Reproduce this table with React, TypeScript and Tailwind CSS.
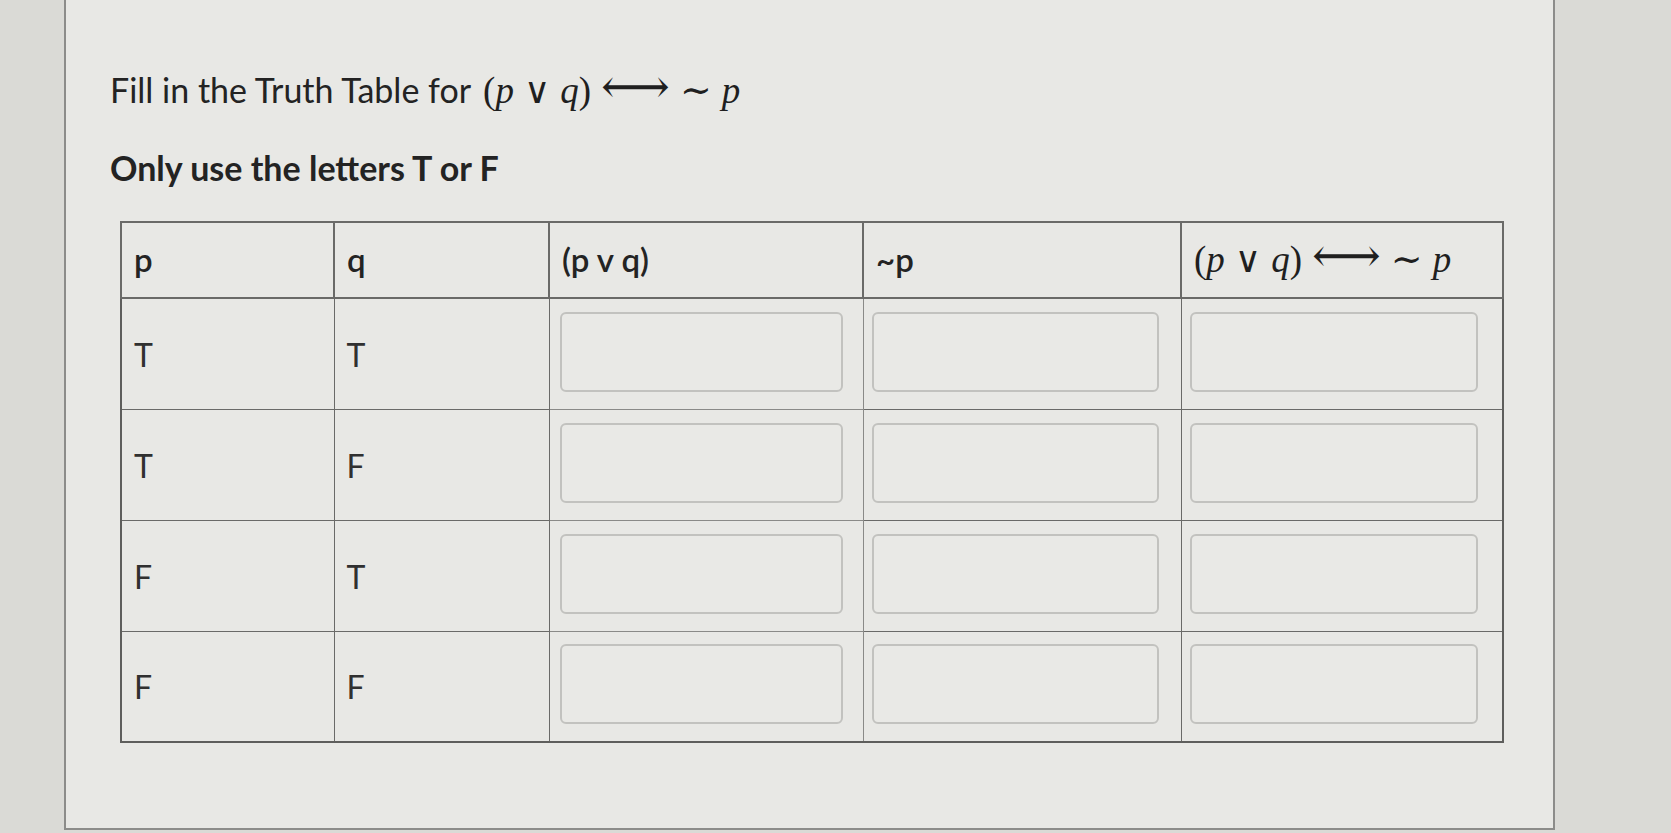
const rows = [
  ["T", "T"],
  ["T", "F"],
  ["F", "T"],
  ["F", "F"],
];

const serif = { fontFamily: '"Liberation Serif", "DejaVu Serif", serif' };
const sym = { fontFamily: '"DejaVu Serif", "Liberation Serif", serif' };

const MathExpr = () => (
  <span className="whitespace-nowrap text-[37px] leading-[30px] text-[#1f1f1f]" style={serif}>
    (<i>p</i>
    <span className="mx-[10px] text-[36px] font-light" style={sym}>∨</span>
    <i>q</i>)
    <span className="ml-[10px] mr-[10px] text-[48px]" style={sym}>⟷</span>
    <span className="text-[38px]" style={sym}>∼</span>
    <span className="ml-[10px]"><i>p</i></span>
  </span>
);

const Box = () => (
  <div className="h-[80px] w-full rounded-[6px] border-2 border-[#c2c2bf] bg-[#e9e9e6]" />
);

export default function App() {
  return (
    <div className="flex h-[833px] w-[1671px] bg-[#dadad6] font-['Lato',sans-serif] text-[#232323]">
      <div className="ml-[64px] flex h-[830px] w-[1491px] flex-col border-x-2 border-b-2 border-[#8c8c8a] bg-[#e8e8e5] pl-[44px] pt-[70px]">
        <h1 className="flex h-[40px] items-baseline gap-[12px] text-[34px] leading-[40px]">
          <span>Fill in the Truth Table for</span>
          <MathExpr />
        </h1>
        <p className="mt-[38px] text-[34px] leading-[40px] font-bold">Only use the letters T or F</p>

        <table className="mt-[33px] ml-[10px] w-[1382px] table-fixed border-collapse border-2 border-[#5e5e5c]">
          <colgroup>
            <col className="w-[213px]" />
            <col className="w-[215px]" />
            <col className="w-[314px]" />
            <col className="w-[318px]" />
            <col className="w-[322px]" />
          </colgroup>
          <thead>
            <tr className="h-[76px] text-left text-[33px]">
              <th className="border-2 border-[#6a6a68] px-[12px] font-semibold">p</th>
              <th className="border-2 border-[#6a6a68] px-[12px] font-semibold">q</th>
              <th className="border-2 border-[#6a6a68] px-[12px] font-semibold">(p v q)</th>
              <th className="border-2 border-[#6a6a68] px-[12px] font-semibold">~p</th>
              <th className="border-2 border-[#6a6a68] px-[12px] font-normal">
                <MathExpr />
              </th>
            </tr>
          </thead>
          <tbody>
            {rows.map((r, i) => (
              <tr key={i} className="h-[111px] text-[32px] text-[#303030]">
                <td className="border border-[#6a6a68] px-[12px] pt-[2px]">{r[0]}</td>
                <td className="border border-[#6a6a68] px-[12px] pt-[2px]">{r[1]}</td>
                <td className="border border-[#8a8a88] pl-[10px] pr-[20px] pb-[12px] pt-[8px]">
                  <Box />
                </td>
                <td className="border border-[#6a6a68] pl-[8px] pr-[22px] pb-[12px] pt-[8px]">
                  <Box />
                </td>
                <td className="border border-[#6a6a68] pl-[8px] pr-[24px] pb-[12px] pt-[8px]">
                  <Box />
                </td>
              </tr>
            ))}
          </tbody>
        </table>
      </div>
    </div>
  );
}
